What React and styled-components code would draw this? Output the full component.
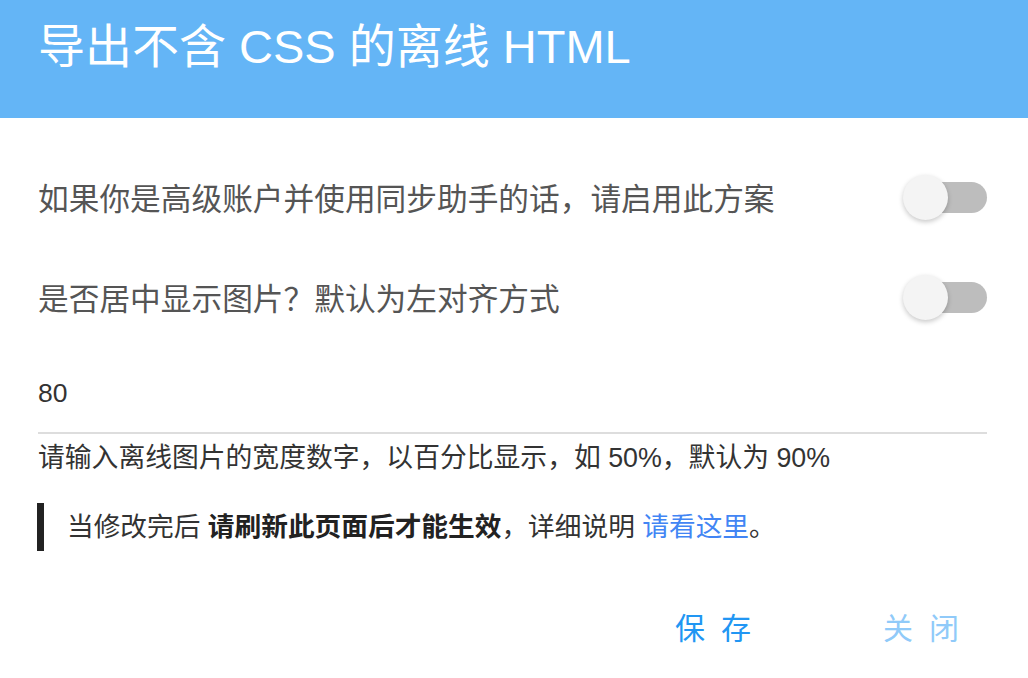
import React, { useState } from "react";
import styled, { createGlobalStyle } from "styled-components";

const GlobalStyle = createGlobalStyle`
  html, body {
    margin: 0;
    padding: 0;
    background: #fff;
  }
  body {
    font-family: "Liberation Sans", "Noto Sans CJK SC", sans-serif;
  }
`;

const Dialog = styled.div`
  width: 1028px;
  height: 678px;
  background: #fff;
  overflow: hidden;
`;

const Header = styled.header`
  height: 118px;
  box-sizing: border-box;
  padding: 22px 38px 0;
  background: #64b5f6;
`;

const Title = styled.h1`
  margin: 0;
  font-size: 47px;
  line-height: 50px;
  font-weight: 400;
  color: #fff;
`;

const Body = styled.div`
  padding: 29px 41px 0 38px;
`;

const Row = styled.div`
  display: flex;
  align-items: center;
  justify-content: space-between;
  height: 100px;
`;

const Label = styled.span`
  font-size: 30.7px;
  line-height: 40px;
  color: #555;
  padding-top: 6px;
`;

const Switch = styled.button`
  position: relative;
  width: 84px;
  height: 45px;
  padding: 0;
  border: 0;
  background: none;
  cursor: pointer;
`;

const Track = styled.span`
  position: absolute;
  right: 0;
  top: 7px;
  width: 76px;
  height: 31px;
  border-radius: 16px;
  background: ${({ on }) => (on ? "#90caf9" : "#bdbdbd")};
`;

const Thumb = styled.span`
  position: absolute;
  top: 0;
  left: ${({ on }) => (on ? "39px" : "0")};
  width: 45px;
  height: 45px;
  border-radius: 50%;
  background: ${({ on }) => (on ? "#2196f3" : "#f4f4f4")};
  box-shadow: 0 2px 5px rgba(0, 0, 0, 0.22);
`;

const Field = styled.div`
  padding-top: 28px;
  border-bottom: 2px solid #ddd;
  padding-bottom: 21px;
`;

const Input = styled.input`
  display: block;
  width: 100%;
  box-sizing: border-box;
  border: 0;
  outline: none;
  padding: 0;
  height: 36px;
  font-family: "Liberation Sans", "Noto Sans CJK SC", sans-serif;
  font-size: 26.5px;
  color: #333;
  background: transparent;
`;

const Hint = styled.p`
  margin: 6px 0 0;
  font-size: 26.8px;
  line-height: 36px;
  color: #333;
`;

const Note = styled.blockquote`
  margin: 27px 0 0 -1px;
  padding-left: 23px;
  border-left: 7px solid #222;
  font-size: 26.7px;
  line-height: 48px;
  color: #333;

  & b {
    font-weight: 700;
    color: #222;
  }
`;

const Link = styled.a`
  color: #4285f4;
  text-decoration: none;
`;

const Actions = styled.div`
  display: flex;
  justify-content: flex-end;
  gap: 92px;
  margin-top: 45px;
`;

const ActionButton = styled.button`
  height: 60px;
  padding: 0 12px;
  border: 0;
  background: none;
  font-family: "Liberation Sans", "Noto Sans CJK SC", sans-serif;
  font-size: 30px;
  letter-spacing: 16px;
  color: ${({ muted }) => (muted ? "#90caf9" : "#2196f3")};
  cursor: pointer;
`;

const Toggle = ({ on, onChange }) => (
  <Switch onClick={() => onChange(!on)}>
    <Track on={on} />
    <Thumb on={on} />
  </Switch>
);

export default function App() {
  const [sync, setSync] = useState(false);
  const [center, setCenter] = useState(false);
  const [width, setWidth] = useState("80");

  return (
    <Dialog>
      <GlobalStyle />
      <Header>
        <Title>导出不含 CSS 的离线 HTML</Title>
      </Header>
      <Body>
        <Row>
          <Label>如果你是高级账户并使用同步助手的话，请启用此方案</Label>
          <Toggle on={sync} onChange={setSync} />
        </Row>
        <Row>
          <Label>是否居中显示图片？默认为左对齐方式</Label>
          <Toggle on={center} onChange={setCenter} />
        </Row>
        <Field>
          <Input value={width} onChange={(e) => setWidth(e.target.value)} />
        </Field>
        <Hint>请输入离线图片的宽度数字，以百分比显示，如 50%，默认为 90%</Hint>
        <Note>
          当修改完后 <b>请刷新此页面后才能生效</b>，详细说明 <Link href="#">请看这里</Link>。
        </Note>
        <Actions>
          <ActionButton>保存</ActionButton>
          <ActionButton muted>关闭</ActionButton>
        </Actions>
      </Body>
    </Dialog>
  );
}
